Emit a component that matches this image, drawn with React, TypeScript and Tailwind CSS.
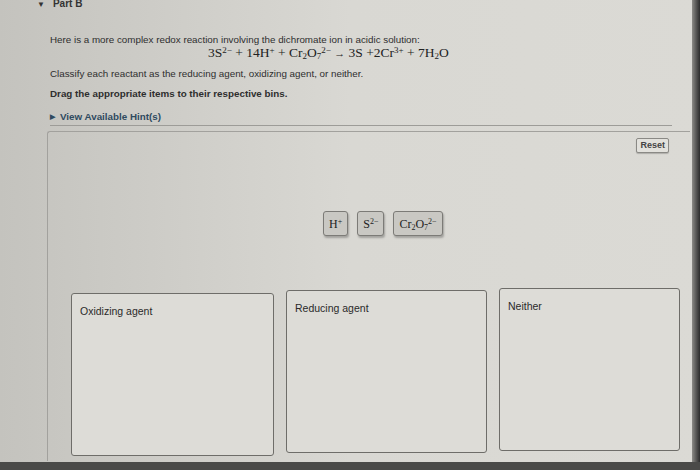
import React from 'react'

const sans = { fontFamily: '"Liberation Sans", Arial, sans-serif' }
const serif = { fontFamily: '"Liberation Serif", "Times New Roman", serif' }

function Tile({ children }: { children: React.ReactNode }) {
  return (
    <div
      className="h-[25px] px-[5px] flex items-center justify-center rounded-[3px] border border-[#7c7b77] bg-[#c9c8c3] text-[12px] text-[#222] shadow-[1px_2px_2px_rgba(0,0,0,0.25)]"
      style={serif}
    >
      <span>{children}</span>
    </div>
  )
}

function Bin({ label, w }: { label: string; w: string }) {
  return (
    <div className={`${w} h-[163px] rounded-[3px] border border-[#6e6d69] bg-[#dddcd7] px-[8px] pt-[4px]`}>
      <span className="text-[10.5px] text-[#2a2a2a]" style={sans}>{label}</span>
    </div>
  )
}

const sup = 'text-[8px] leading-none'
const esup = 'text-[9px] leading-none'

export default function App() {
  return (
    <div
      className="relative w-[700px] h-[470px] overflow-hidden bg-gradient-to-r from-[#c4c3be] via-[#d9d8d3] to-[#dbdad5]"
      style={sans}
    >
      {/* dark edges of the photo */}
      <div className="absolute right-0 top-0 w-[8px] h-full bg-gradient-to-r from-[#8d8c88] to-[#2c2c2c]" />
      <div className="absolute left-0 bottom-0 w-full h-[8px] bg-[#4a4a48]" />

      {/* Part header */}
      <div className="flex items-center h-[10px] pl-[37px] gap-[8px]">
        <span className="text-[8px] text-[#333] leading-none">▼</span>
        <span className="text-[10px] font-bold text-[#333] leading-none -mt-[2px]">Part B</span>
      </div>

      <div className="pl-[50px] pt-[24px] text-[#2e2e2e]">
        <p className="text-[9.8px] leading-[12px]">
          Here is a more complex redox reaction involving the dichromate ion in acidic solution:
        </p>
        <p className="pl-[158px] text-[13.5px] leading-[14px] text-[#222]" style={serif}>
          3S<sup className={esup}>2−</sup> + 14H<sup className={esup}>+</sup> + Cr<sub className={esup}>2</sub>O<sub className={esup}>7</sub>
          <sup className={esup}>2−</sup> <span className="text-[11px]">→</span> 3S +2Cr<sup className={esup}>3+</sup> + 7H<sub className={esup}>2</sub>O
        </p>
        <p className="mt-[8px] text-[9.8px] leading-[12px]">
          Classify each reactant as the reducing agent, oxidizing agent, or neither.
        </p>
        <p className="mt-[8px] text-[9.8px] leading-[12px] font-bold">
          Drag the appropriate items to their respective bins.
        </p>
        <div className="mt-[11px] flex items-center gap-[5px] text-[9.8px] leading-[12px] font-bold text-[#2f4a60]">
          <span className="text-[7px]">▶</span>
          <span>View Available Hint(s)</span>
        </div>
        <div className="mt-[2px] w-[622px] border-t border-[#9d9c98]" />
      </div>

      {/* Drag-and-drop area */}
      <div className="ml-[47px] mt-[5px] w-[643px] h-[330px] rounded-tl-[3px] border-l border-t border-[#a2a19d] relative">
        <div className="flex justify-end pr-[21px] pt-[6px]">
          <button
            className="h-[15px] px-[3px] rounded-[2px] border border-[#8a8985] bg-[#e2e1dc] text-[9px] font-bold text-[#444] leading-none shadow-[0_1px_1px_rgba(0,0,0,0.2)]"
            style={sans}
          >
            Reset
          </button>
        </div>

        <div className="flex gap-[9px] pl-[275px] mt-[58px]">
          <Tile>
            H<sup className={sup}>+</sup>
          </Tile>
          <Tile>
            S<sup className={sup}>2−</sup>
          </Tile>
          <Tile>
            Cr<sub className={sup}>2</sub>O<sub className={sup}>7</sub>
            <sup className={sup}>2−</sup>
          </Tile>
        </div>

        <div className="flex items-start gap-[12px] pl-[23px] mt-[57px]">
          <Bin label="Oxidizing agent" w="w-[203px]" />
          <div className="-mt-[3px]">
            <Bin label="Reducing agent" w="w-[201px]" />
          </div>
          <div className="-mt-[5px]">
            <Bin label="Neither" w="w-[181px]" />
          </div>
        </div>
      </div>
    </div>
  )
}
